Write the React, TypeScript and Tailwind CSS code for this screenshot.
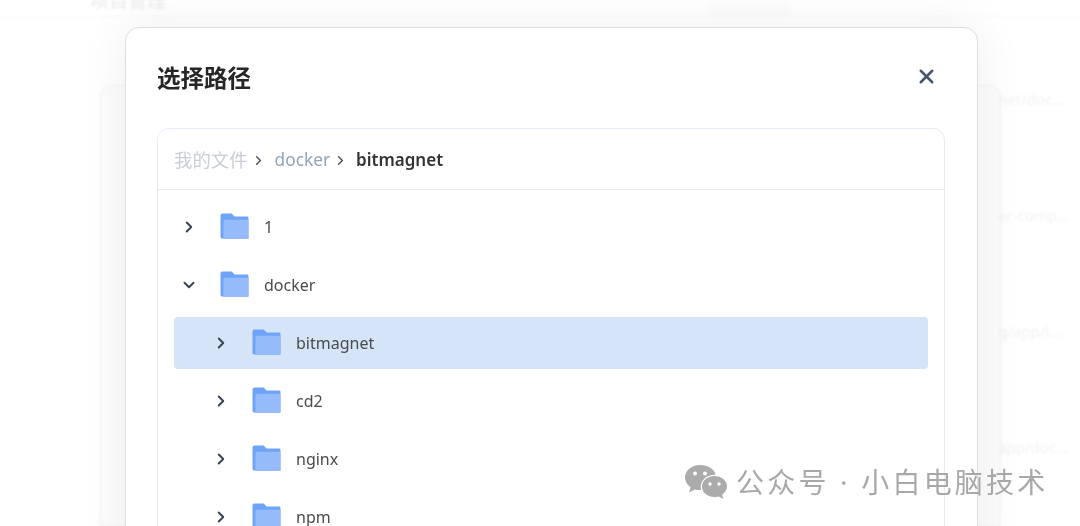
import React from 'react';
import { ChevronDown, ChevronRight, X } from 'lucide-react';

const ROWS = [
  { name: '1', depth: 0, open: false, active: false },
  { name: 'docker', depth: 0, open: true, active: false },
  { name: 'bitmagnet', depth: 1, open: false, active: true },
  { name: 'cd2', depth: 1, open: false, active: false },
  { name: 'nginx', depth: 1, open: false, active: false },
  { name: 'npm', depth: 1, open: false, active: false },
];

const BACK_PATHS = ['net/doc...', 'er-comp...', 'g/app/i...', 'app/doc...'];

const FolderIcon = () => (
  <svg width="29" height="27" viewBox="0 0 30 28" className="mb-[2px] shrink-0">
    <path d="M0.500 2.500a2 2 0 0 1 2-2h9.500l3.200 3h12.800a1.500 1.500 0 0 1 1.500 1.500v21.500h-27a2 2 0 0 1-2-2z" fill="#6ea3f8" />
    <path d="M3.500 9a2 2 0 0 1 2-2h23a1 1 0 0 1 1 1v18a1 1 0 0 1-1 1h-25z" fill="#95bbfb" />
  </svg>
);

const WeChatIcon = () => (
  <svg width="44" height="36" viewBox="0 0 44 36">
    <path d="M16 1C7.500 1 1 6.600 1 13.600c0 4 2.200 7.400 5.600 9.700L5 28.500l6-3.100c1.600.4 3.200.7 5 .7h1.200a11 11 0 0 1-.5-3.200c0-6.800 6.200-12.200 14-12.200h1C30.400 5 24 1 16 1z" fill="#ababab" />
    <path d="M43 22.500C43 16.600 37.300 12 30.500 12S18 16.600 18 22.500 23.700 33 30.500 33c1.400 0 2.800-.2 4.100-.6l4.700 2.600-1.200-4.300C41 28.700 43 25.800 43 22.500z" fill="#ababab" />
    <circle cx="11" cy="9.500" r="2" fill="#fff" />
    <circle cx="21" cy="9.500" r="2" fill="#fff" />
    <circle cx="26" cy="20" r="1.700" fill="#fff" />
    <circle cx="35" cy="20" r="1.700" fill="#fff" />
  </svg>
);

export default function App() {
  return (
    <div className="relative h-[526px] w-[1080px] overflow-hidden bg-white font-['Noto_Sans','Noto_Sans_CJK_SC',sans-serif]">
      {/* page behind the dialog */}
      <div className="flex h-full flex-col blur-[1px]">
        <div className="flex h-[17px] items-start border-b border-[#f8f8f8] pl-[90px]">
          <span className="-mt-[11px] text-[19px] leading-[24px] font-medium text-[#eeeeee]">项目管理</span>
          <div className="ml-[542px] h-[16px] w-[82px] rounded-b bg-[#fdfdfd]" />
        </div>
        <div className="mt-[68px] flex flex-1">
          <div className="ml-[100px] w-[901px] rounded-t-xl border border-[#f1f1f1] bg-[#fdfdfd]" />
          <div className="-ml-[3px] flex flex-col gap-[93px] pt-[3px]">
            {BACK_PATHS.map((p) => (
              <span key={p} className="h-[23px] text-[15px] leading-[23px] text-[#f1f1f1]">{p}</span>
            ))}
          </div>
        </div>
      </div>

      {/* dialog */}
      <div className="absolute top-[27px] left-[125px] h-[540px] w-[853px] rounded-[14px] border-[1.5px] border-[#dedede] bg-white pr-[32px] pl-[31px] shadow-[0_0_50px_rgba(0,0,0,0.07)]">
        <div className="blur-[0.35px]">
          <div className="flex h-[100px] items-center justify-between">
            <h2 className="text-[23.5px] leading-[32px] font-bold text-[#262626]">选择路径</h2>
            <X size={23} strokeWidth={2.6} className="mr-[7px] mb-[3px] text-[#475569]" />
          </div>
          <div className="rounded-t-xl border border-[#e5ebf5]">
            <div className="flex h-[61px] items-center border-b border-[#e5ebf5] pt-[2px] pl-4 text-[17px]">
              <span className="text-[18.4px] text-[#c9ced6]">我的文件</span>
              <ChevronRight size={15} strokeWidth={2.4} className="ml-[3px] text-[#4b5563]" />
              <span className="ml-[9px] text-[17.3px] text-[#94a3b8]">docker</span>
              <ChevronRight size={15} strokeWidth={2.4} className="ml-[3px] text-[#4b5563]" />
              <span className="ml-[8px] font-semibold text-[#333333]">bitmagnet</span>
            </div>
            <div className="flex flex-col gap-[6px] px-4 pt-[11px]">
              {ROWS.map((row) => (
                <div
                  key={row.name}
                  className={row.active
                    ? 'flex h-[52px] items-center rounded bg-[#d6e4f7]'
                    : 'flex h-[52px] items-center rounded'}
                >
                  <div className={row.depth === 1 ? 'flex items-center pl-[38px]' : 'flex items-center pl-[6px]'}>
                    {row.open
                      ? <ChevronDown size={18} strokeWidth={2.5} className="text-[#374151]" />
                      : <ChevronRight size={18} strokeWidth={2.5} className="text-[#374151]" />}
                    <div className="ml-[22px] flex"><FolderIcon /></div>
                    <span className="ml-[15px] text-[16px] text-[#4b4b4b]">{row.name}</span>
                  </div>
                </div>
              ))}
            </div>
          </div>
        </div>
      </div>

      {/* watermark */}
      <div className="absolute top-[463px] left-[684px] flex items-center gap-[8px] blur-[0.35px]">
        <WeChatIcon />
        <span className="text-[28px] leading-[38px] tracking-[3.2px] whitespace-nowrap text-[#a8a8a8]">公众号 · 小白电脑技术</span>
      </div>
    </div>
  );
}
